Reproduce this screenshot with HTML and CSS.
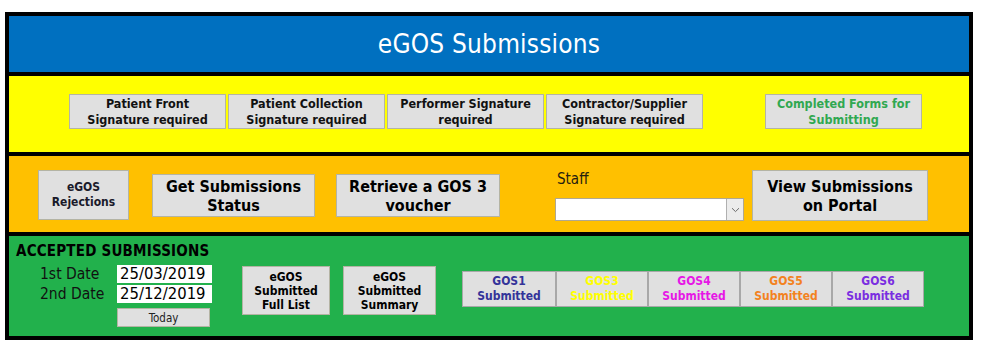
FILE: index.html
```html
<!DOCTYPE html>
<html>
<head>
<meta charset="utf-8">
<link rel="stylesheet" href="styles.css">
</head>
<body>
<div class="frame">
  <div class="sec sec-blue">
    <h1 class="title">eGOS Submissions</h1>
  </div>
  <div class="sec sec-yellow">
    <div class="btn sig">Patient Front<br>Signature required</div>
    <div class="btn sig">Patient Collection<br>Signature required</div>
    <div class="btn sig">Performer Signature<br>required</div>
    <div class="btn sig">Contractor/Supplier<br>Signature required</div>
    <div class="btn sig completed">Completed Forms for<br>Submitting</div>
  </div>
  <div class="sec sec-orange">
    <div class="btn rej">eGOS<br>Rejections</div>
    <div class="btn big status">Get Submissions<br>Status</div>
    <div class="btn big retrieve">Retrieve a GOS 3<br>voucher</div>
    <div class="staff">
      <div class="staff-label">Staff</div>
      <div class="select">
        <span class="select-field"></span>
        <span class="select-arrow">
          <svg width="9" height="6" viewBox="0 0 9 6"><path d="M1 1.2 L4.5 4.6 L8 1.2" fill="none" stroke="#6b6b6b" stroke-width="1"/></svg>
        </span>
      </div>
    </div>
    <div class="btn big portal">View Submissions<br>on Portal</div>
  </div>
  <div class="sec sec-green">
    <div class="accepted">
      <div class="acc-title">ACCEPTED SUBMISSIONS</div>
      <div class="dates">
        <div class="date-label">1st Date</div>
        <div class="date-box">25/03/2019</div>
        <div class="date-label">2nd Date</div>
        <div class="date-box">25/12/2019</div>
        <div></div>
        <div class="btn today">Today</div>
      </div>
    </div>
    <div class="btn list fulllist">eGOS<br>Submitted<br>Full List</div>
    <div class="btn list summary">eGOS<br>Submitted<br>Summary</div>
    <div class="gos-row">
      <div class="btn gos gos1">GOS1<br>Submitted</div>
      <div class="btn gos gos3">GOS3<br>Submitted</div>
      <div class="btn gos gos4">GOS4<br>Submitted</div>
      <div class="btn gos gos5">GOS5<br>Submitted</div>
      <div class="btn gos gos6">GOS6<br>Submitted</div>
    </div>
  </div>
</div>
</body>
</html>
```

FILE: styles.css
```css
* { box-sizing: border-box; }
html, body { margin: 0; padding: 0; background: #ffffff; }
body {
  font-family: "DejaVu Sans Condensed", "DejaVu Sans", sans-serif;
  color: #000;
}
.frame {
  margin: 12px 0 0 5px;
  width: 968px;
  height: 328px;
  border: 4px solid #000;
  background: #000;
  display: flex;
  flex-direction: column;
  gap: 4px;
}
.sec { display: flex; }
.sec-blue {
  height: 56px;
  background: #0070c0;
  align-items: center;
  justify-content: center;
}
.title {
  margin: 0;
  font-weight: normal;
  font-size: 26px;
  color: #fff;
  line-height: 30px;
  letter-spacing: 0.2px;
}
.btn {
  background: #e0e0e0;
  border: 1px solid #b4b4a4;
  text-align: center;
  font-weight: bold;
  display: flex;
  align-items: center;
  justify-content: center;
}
.sec-yellow {
  height: 76px;
  background: #ffff00;
  padding: 18px 0 0 60px;
  align-items: flex-start;
  gap: 2px;
}
.sig {
  width: 157px;
  height: 35px;
  font-size: 12.5px;
  line-height: 16px;
  color: #111;
}
.completed { margin-left: 60px; color: #30a850; }

.sec-orange {
  height: 76px;
  background: #ffc000;
  align-items: flex-start;
  padding-left: 29px;
}
.rej {
  width: 91px;
  height: 50px;
  margin-top: 14px;
  font-size: 12px;
  line-height: 15px;
  color: #1a1a2a;
}
.big {
  height: 43px;
  margin-top: 18px;
  font-size: 16px;
  line-height: 19px;
}
.status { width: 163px; margin-left: 23px; }
.retrieve { width: 164px; margin-left: 21px; }
.staff {
  margin-left: 55px;
  margin-top: 14px;
  width: 189px;
}
.staff-label {
  font-size: 15px;
  line-height: 18px;
  padding-left: 2px;
  color: #262010;
}
.select {
  margin-top: 10px;
  height: 23px;
  display: flex;
  background: #fff;
  border: 1px solid #b0a890;
}
.select-field { flex: 1; }
.select-arrow {
  width: 17px;
  background: #ececec;
  border-left: 1px solid #b0b0b0;
  display: flex;
  align-items: center;
  justify-content: center;
}
.portal { width: 176px; height: 51px; margin-top: 14px; margin-left: 8px; }

.sec-green {
  height: 100px;
  background: #22b14c;
  align-items: flex-start;
}
.accepted { padding: 6px 0 0 7px; width: 233px; }
.acc-title {
  font-weight: bold;
  font-size: 15px;
  line-height: 18px;
  letter-spacing: 0.2px;
}
.dates {
  margin-top: 5px;
  display: grid;
  grid-template-columns: 101px 95px;
  row-gap: 2px;
}
.date-label {
  font-size: 15.5px;
  line-height: 18px;
  padding-left: 24px;
  color: #111;
}
.date-box {
  background: #fff;
  height: 18px;
  font-size: 16.5px;
  line-height: 18px;
  padding-left: 3px;
}
.today {
  margin-top: 3px;
  width: 93px;
  height: 19px;
  font-weight: normal;
  font-size: 11.5px;
  color: #222;
}
.list {
  margin-top: 30px;
  height: 49px;
  font-size: 12px;
  line-height: 14px;
}
.fulllist { width: 88px; }
.summary { width: 93px; margin-left: 13px; }
.gos-row { display: flex; margin-top: 35px; margin-left: 26px; }
.gos {
  width: 92px;
  height: 36px;
  font-size: 12px;
  line-height: 15px;
  border-color: #a8a8a8;
}
.gos1 { color: #333399; width: 94px; }
.gos3 { color: #ffff00; }
.gos4 { color: #e617e6; }
.gos5 { color: #f3821e; }
.gos6 { color: #7a2ee0; }
```
